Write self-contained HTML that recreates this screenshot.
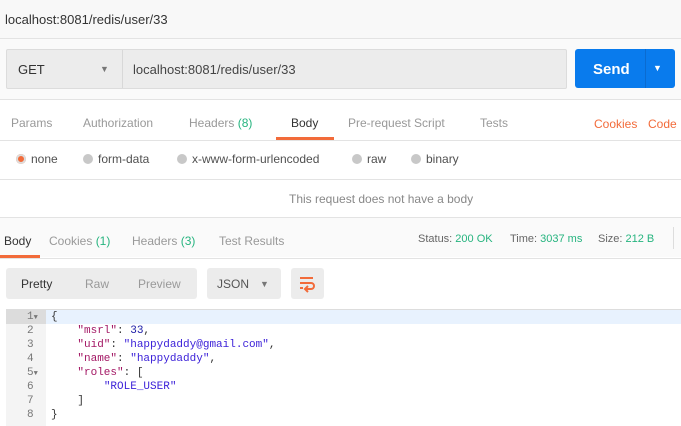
<html><head><style>
body{margin:0;width:681px;height:426px;overflow:hidden;font-family:"Liberation Sans",sans-serif;font-size:12px;color:#505050;background:#fff;position:relative}
.a{position:absolute;white-space:nowrap}
.g{color:#26b47f}.o{color:#f26b3a}.l{color:#888}
.hl{position:absolute;left:0;width:681px;height:1px;background:#e3e3e3}
.r{display:inline-block;width:10px;height:10px;border-radius:50%;background:#c8c8c8;vertical-align:-1px;margin-right:5px}
.code{font-family:"Liberation Mono",monospace;font-size:11px}
.code div div{height:14px;line-height:14px}
.k{color:#a31764}.s{color:#3a1fd8}.n{color:#1a1aa6}
</style></head><body>
<div class="a" style="left:0;top:0;width:681px;height:38px;background:#f8f8f8"></div>
<div class="a" style="left:5px;top:12px;font-size:13px;color:#333">localhost:8081/redis/user/33</div>
<div class="hl" style="top:38px"></div>
<div class="a" style="left:0;top:39px;width:681px;height:60px;background:#fafafa"></div>
<div class="a" style="left:6px;top:49px;width:559px;height:38px;background:#ececec;border:1px solid #dcdcdc;border-radius:2px"></div>
<div class="a" style="left:122px;top:50px;width:1px;height:38px;background:#d8d8d8"></div>
<div class="a" style="left:18px;top:62px;font-size:13px;color:#333">GET</div>
<div class="a" style="left:100px;top:64px;font-size:9px;color:#777">▼</div>
<div class="a" style="left:133px;top:62px;font-size:13px;color:#444">localhost:8081/redis/user/33</div>
<div class="a" style="left:575px;top:49px;width:100px;height:39px;background:#097bed;border-radius:3px"></div>
<div class="a" style="left:645px;top:49px;width:1px;height:39px;background:#0a6bd0"></div>
<div class="a" style="left:593px;top:61px;font-size:15px;font-weight:bold;color:#fff">Send</div>
<div class="a" style="left:653px;top:63px;font-size:9px;color:#fff">▼</div>
<div class="hl" style="top:99px"></div>
<div class="a l" style="left:11px;top:116px;color:#999">Params</div>
<div class="a l" style="left:83px;top:116px;color:#999">Authorization</div>
<div class="a l" style="left:189px;top:116px;color:#999">Headers <span class="g">(8)</span></div>
<div class="a" style="left:291px;top:116px;color:#333">Body</div>
<div class="a" style="left:276px;top:137px;width:58px;height:3px;background:#f26b3a"></div>
<div class="a" style="left:348px;top:116px;color:#999">Pre-request Script</div>
<div class="a" style="left:480px;top:116px;color:#999">Tests</div>
<div class="a o" style="left:594px;top:117px">Cookies</div>
<div class="a o" style="left:648px;top:117px">Code</div>
<div class="hl" style="top:140px"></div>
<div class="a" style="left:16px;top:152px"><span class="r" style="background:#f26b3a;box-shadow:0 0 0 2px #ddd inset"></span>none</div>
<div class="a" style="left:83px;top:152px"><span class="r"></span>form-data</div>
<div class="a" style="left:177px;top:152px"><span class="r"></span>x-www-form-urlencoded</div>
<div class="a" style="left:352px;top:152px"><span class="r"></span>raw</div>
<div class="a" style="left:411px;top:152px"><span class="r"></span>binary</div>
<div class="hl" style="top:179px"></div>
<div class="a" style="left:289px;top:192px;color:#888">This request does not have a body</div>
<div class="hl" style="top:217px"></div>
<div class="a" style="left:0;top:218px;width:681px;height:39px;background:#fafafa"></div>
<div class="a" style="left:4px;top:234px;color:#333">Body</div>
<div class="a" style="left:0;top:255px;width:40px;height:3px;background:#f26b3a"></div>
<div class="a" style="left:49px;top:234px;color:#999">Cookies <span class="g">(1)</span></div>
<div class="a" style="left:132px;top:234px;color:#999">Headers <span class="g">(3)</span></div>
<div class="a" style="left:219px;top:234px;color:#999">Test Results</div>
<div class="a" style="left:418px;top:233px;font-size:11px;color:#666">Status: <span class="g">200 OK</span></div>
<div class="a" style="left:510px;top:233px;font-size:11px;color:#666">Time: <span class="g">3037 ms</span></div>
<div class="a" style="left:598px;top:233px;font-size:11px;color:#666">Size: <span class="g">212 B</span></div>
<div class="a" style="left:673px;top:227px;width:1px;height:22px;background:#ddd"></div>
<div class="hl" style="top:258px"></div>
<div class="a" style="left:6px;top:268px;width:191px;height:31px;background:#ececec;border-radius:3px"></div>
<div class="a" style="left:21px;top:277px;color:#333">Pretty</div>
<div class="a" style="left:85px;top:277px;color:#999">Raw</div>
<div class="a" style="left:138px;top:277px;color:#999">Preview</div>
<div class="a" style="left:207px;top:268px;width:74px;height:31px;background:#ececec;border-radius:3px"></div>
<div class="a" style="left:217px;top:277px;color:#555">JSON</div>
<div class="a" style="left:260px;top:279px;font-size:9px;color:#777">▼</div>
<div class="a" style="left:291px;top:268px;width:33px;height:31px;background:#ececec;border-radius:3px"></div>
<svg class="a" style="left:298px;top:275px" width="18" height="18" viewBox="0 0 18 18" fill="none" stroke="#f26b3a" stroke-width="2"><path d="M2 3h13M2 8h11a3 3 0 0 1 0 6H8M10 11l-3 3 3 3M2 13h3"/></svg>
<div class="a" style="left:6px;top:309px;width:675px;height:1px;background:#ddd"></div>
<div class="a" style="left:6px;top:310px;width:40px;height:116px;background:#f4f4f4"></div>
<div class="a" style="left:6px;top:310px;width:675px;height:14px;background:#e8f2fe"></div>
<div class="a" style="left:6px;top:310px;width:40px;height:14px;background:#dcdcdc"></div>
<div class="a code" style="left:0;top:310px;width:681px">
<div style="position:absolute;left:27px;width:16px;color:#777">
<div>1<span style="font-size:7px">▼</span></div><div>2</div><div>3</div><div>4</div><div>5<span style="font-size:7px">▼</span></div><div>6</div><div>7</div><div>8</div></div>
<div style="position:absolute;left:51px;color:#333;white-space:pre"><div>{</div><div>    <span class="k">"msrl"</span>: <span class="n">33</span>,</div><div>    <span class="k">"uid"</span>: <span class="s">"happydaddy@gmail.com"</span>,</div><div>    <span class="k">"name"</span>: <span class="s">"happydaddy"</span>,</div><div>    <span class="k">"roles"</span>: [</div><div>        <span class="s">"ROLE_USER"</span></div><div>    ]</div><div>}</div></div></div>
</body></html>
